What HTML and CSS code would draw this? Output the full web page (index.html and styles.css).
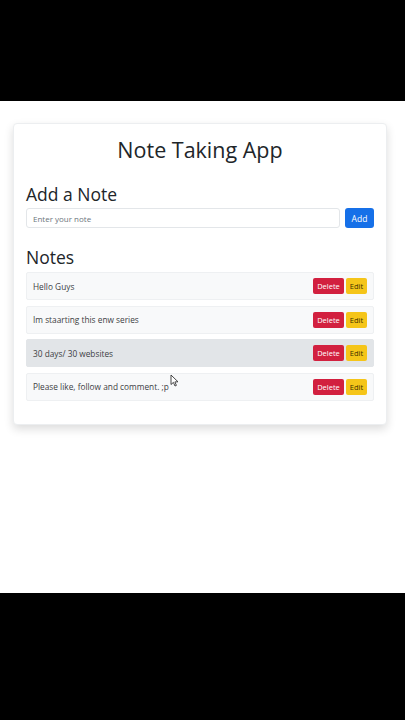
FILE: index.html
```html
<!DOCTYPE html>
<html lang="en">
	<head>
		<meta charset="UTF-8" />
		<meta name="viewport" content="width=device-width, initial-scale=1.0" />
		<title>Note Taking App</title>
		<link rel="stylesheet" href="styles.css">
	</head>
	<body>
		<div class="screen">
			<div class="card">
				<h1 class="title">Note Taking App</h1>

				<h2 class="section">Add a Note</h2>
				<div class="add-row">
					<input class="note-input" type="text" placeholder="Enter your note" />
					<span class="btn btn-add">Add</span>
				</div>

				<h2 class="section notes-head">Notes</h2>
				<ul class="notes">
					<li class="note">
						<span class="note-text">Hello Guys</span>
						<span class="actions"><span class="btn btn-del">Delete</span><span class="btn btn-edit">Edit</span></span>
					</li>
					<li class="note">
						<span class="note-text">Im staarting this enw series</span>
						<span class="actions"><span class="btn btn-del">Delete</span><span class="btn btn-edit">Edit</span></span>
					</li>
					<li class="note hover">
						<span class="note-text">30 days/ 30 websites</span>
						<span class="actions"><span class="btn btn-del">Delete</span><span class="btn btn-edit">Edit</span></span>
					</li>
					<li class="note">
						<span class="note-text">Please like, follow and comment. ;p</span>
						<span class="actions"><span class="btn btn-del">Delete</span><span class="btn btn-edit">Edit</span></span>
					</li>
				</ul>

				<!-- mouse pointer -->
				<svg class="cursor" width="9" height="13" viewBox="0 0 9 13">
					<path d="M1 1 L1 10.5 L3.4 8.4 L5 12 L6.4 11.4 L4.9 7.9 L8 7.8 Z" fill="#fff" stroke="#333" stroke-width="0.9" stroke-linejoin="round" />
				</svg>
			</div>
		</div>
	</body>
</html>
```

FILE: styles.css
```css
body,
ul,
h1,
h2 {
	margin: 0;
	padding: 0;
	list-style: none;
}
body {
	background: #000;
	font-family: "Open Sans", "Noto Sans", sans-serif;
	color: #212529;
}
.screen {
	box-sizing: border-box;
	margin-top: 101px;
	height: 492px;
	background: #fff;
	padding: 22px 18px 0 13px;
}
.card {
	position: relative;
	background: #fff;
	border: 1px solid #eceef0;
	border-radius: 4px;
	box-shadow: 0 4px 10px rgba(0, 0, 0, 0.14);
	padding: 10px 12px 23px 12px;
}
.title {
	font-size: 21.5px;
	font-weight: 400;
	text-align: center;
	line-height: 32px;
	margin-bottom: 17px;
}
.section {
	font-size: 17.5px;
	font-weight: 400;
	line-height: 22px;
	margin-bottom: 3px;
}
.notes-head {
	margin-top: 18px;
	margin-bottom: 4px;
}
.add-row {
	display: flex;
	align-items: center;
	gap: 5px;
}
.note-input {
	flex: 1;
	height: 20px;
	box-sizing: border-box;
	border: 1px solid #e3e6e9;
	border-radius: 3px;
	padding: 0 6px;
	font-family: inherit;
	font-size: 8px;
	outline: none;
}
.note-input::placeholder {
	color: #6c757d;
}
.btn {
	display: inline-flex;
	align-items: center;
	justify-content: center;
	border-radius: 2px;
	font-size: 7.5px;
	color: #fff;
}
.btn-add {
	width: 29px;
	height: 20px;
	background: #1670e8;
	border-radius: 3px;
	font-size: 8.5px;
}
.notes {
	display: flex;
	flex-direction: column;
	gap: 5.5px;
}
.note {
	display: flex;
	align-items: center;
	justify-content: space-between;
	height: 28px;
	box-sizing: border-box;
	padding: 0 6px;
	background: #f8f9fa;
	border: 1px solid #eef0f2;
	border-radius: 2px;
	font-size: 8.3px;
	color: #3c4043;
}
.note.hover {
	background: #e2e5e8;
	border-color: #e2e5e8;
}
.actions {
	display: flex;
	gap: 2px;
}
.btn-del {
	width: 31px;
	height: 16px;
	background: #d2203f;
}
.btn-edit {
	width: 21px;
	height: 16px;
	background: #f5c519;
	color: #3a3000;
}
.cursor {
	position: absolute;
	left: 156px;
	top: 250px;
}
```
